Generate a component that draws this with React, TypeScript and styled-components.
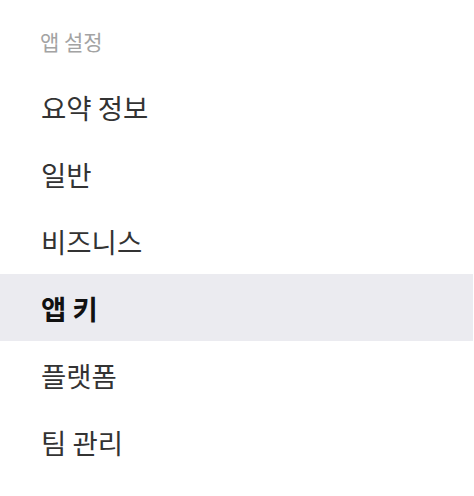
import React from 'react'
import styled, { createGlobalStyle } from 'styled-components'

const GlobalStyle = createGlobalStyle`
  body {
    margin: 0;
    background: #ffffff;
    font-family: 'Noto Sans CJK KR', 'Noto Sans', sans-serif;
  }
`

const Nav = styled.nav`
  width: 473px;
  padding-top: 25px;
`

const SectionTitle = styled.div`
  height: 32px;
  padding-left: 40px;
  font-size: 21px;
  line-height: 32px;
  color: #a3a3a3;
`

const List = styled.ul`
  list-style: none;
  margin: 16px 0 0;
  padding: 0;
`

const Item = styled.li<{ $active?: boolean }>`
  display: flex;
  align-items: center;
  height: 67px;
  padding-left: 41px;
  font-size: 27.5px;
  font-weight: ${p => (p.$active ? 700 : 400)};
  color: ${p => (p.$active ? '#111111' : '#333333')};
  background: ${p => (p.$active ? '#ebebf0' : 'transparent')};
`

const items = ['요약 정보', '일반', '비즈니스', '앱 키', '플랫폼', '팀 관리']

export default function App() {
  return (
    <>
      <GlobalStyle />
      <Nav>
        <SectionTitle>앱 설정</SectionTitle>
        <List>
          {items.map(label => (
            <Item key={label} $active={label === '앱 키'}>
              {label}
            </Item>
          ))}
        </List>
      </Nav>
    </>
  )
}
